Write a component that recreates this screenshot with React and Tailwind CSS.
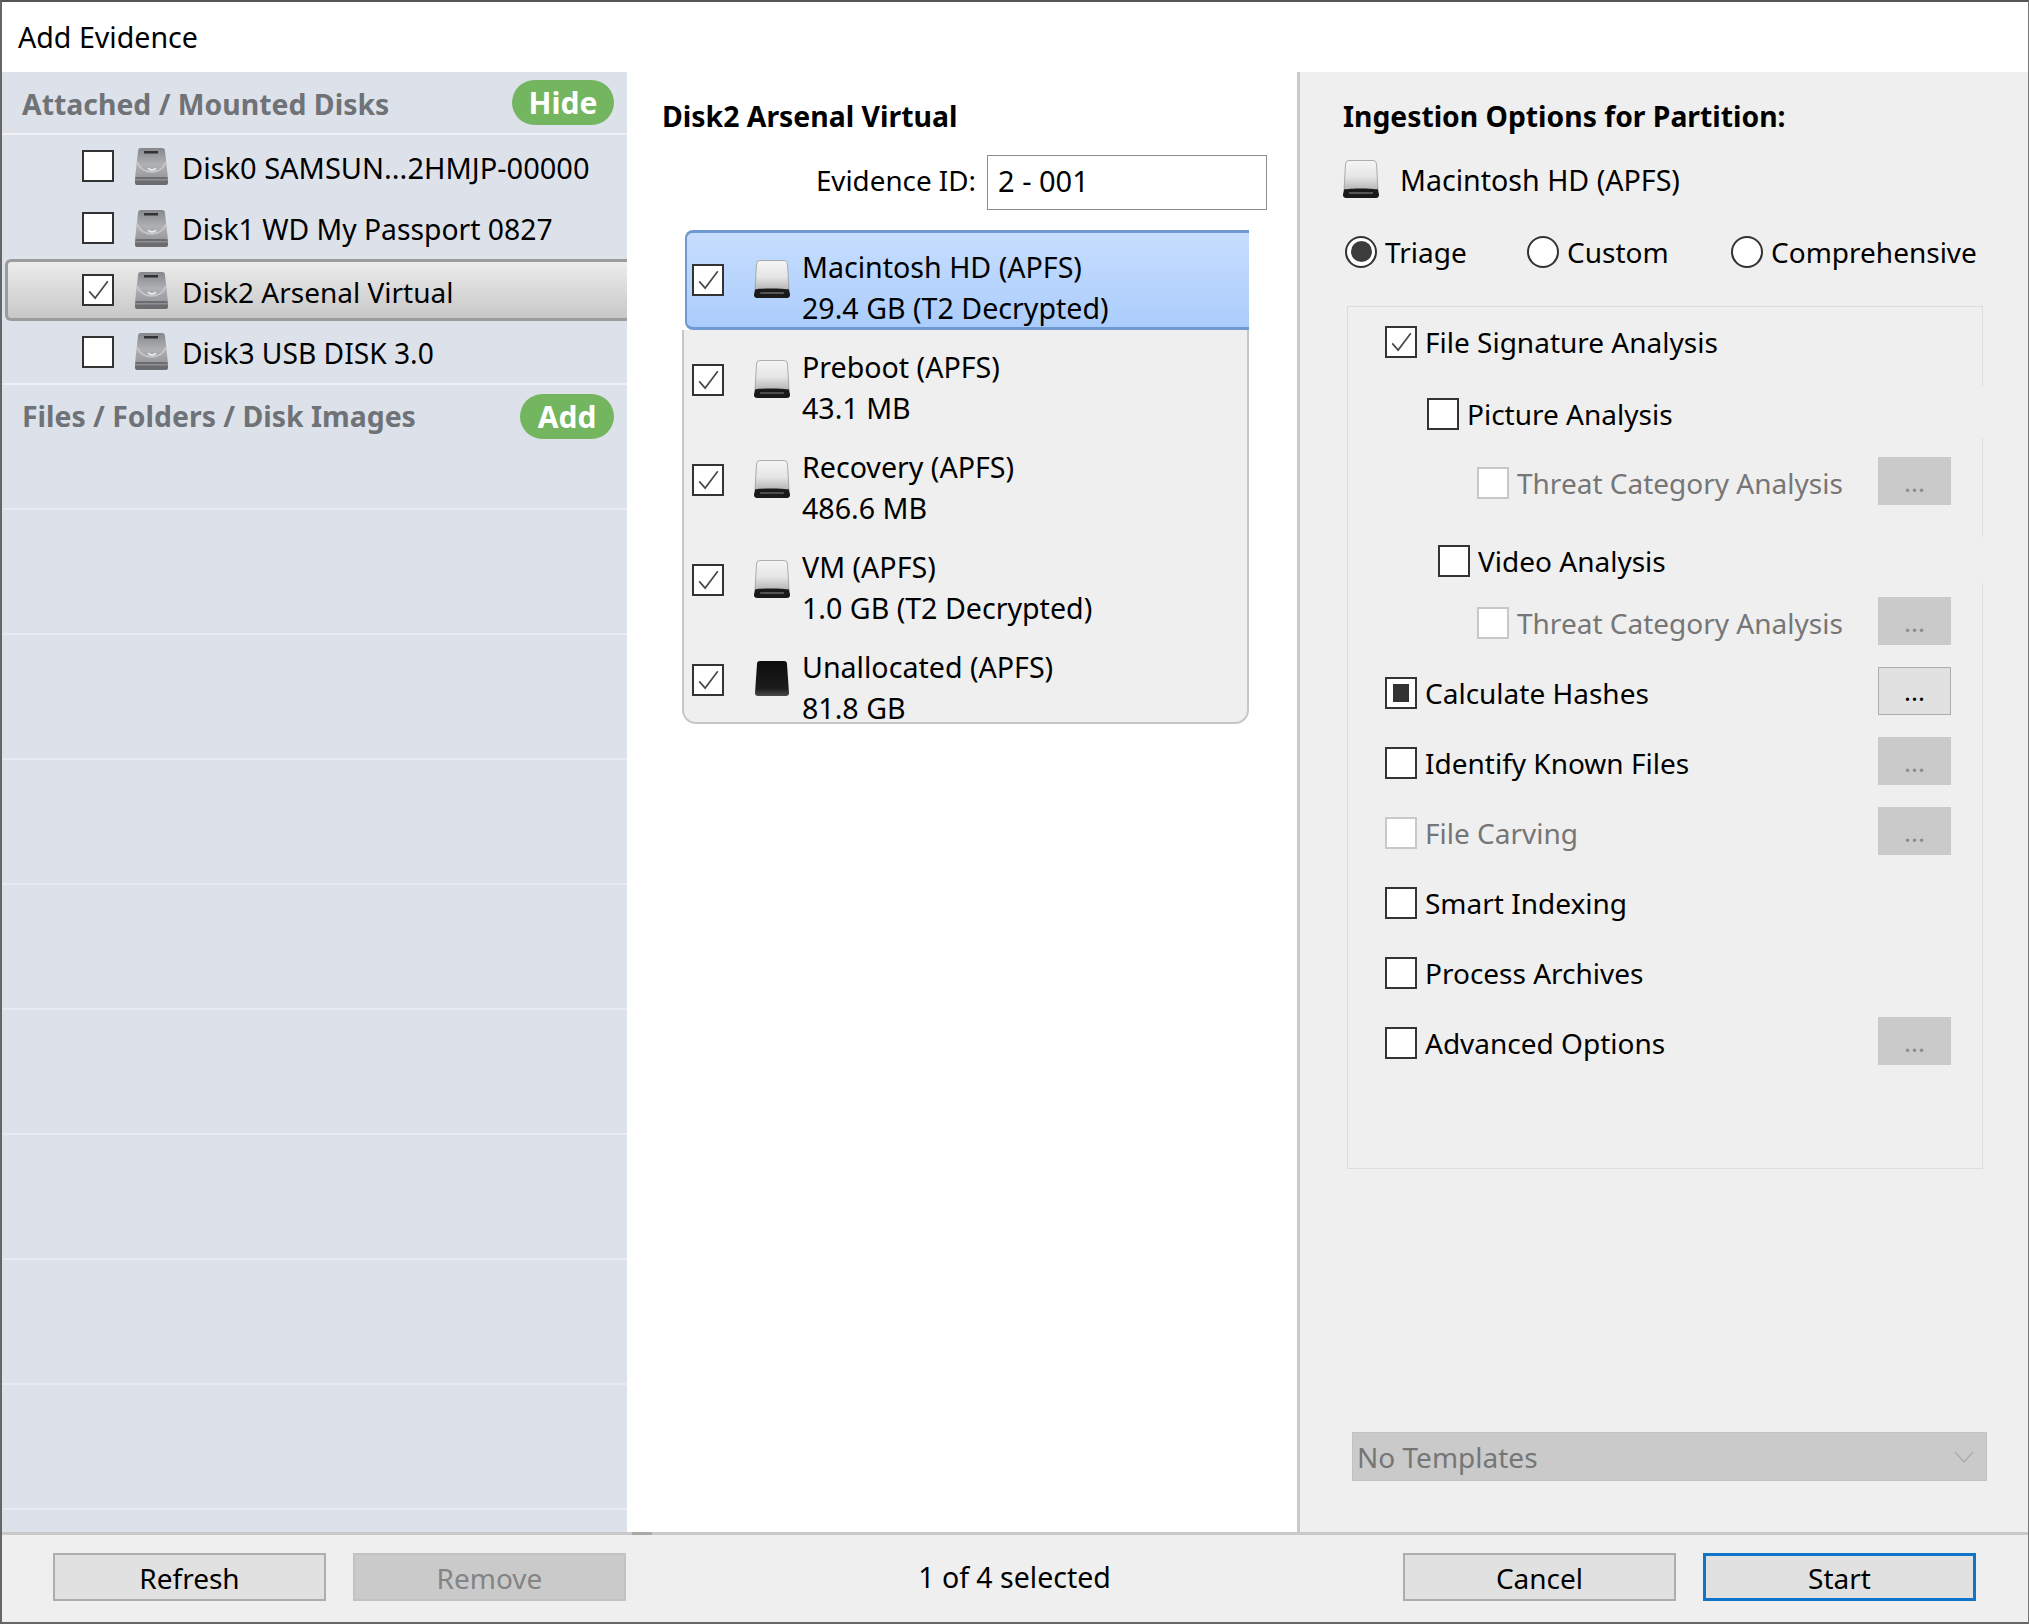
const Check = ({ checked, mixed, disabled }) => (
  <span className={`shrink-0 flex items-center justify-center w-[32px] h-[32px] border-[2.5px] bg-white ${disabled ? 'border-[#c8c8c8]' : 'border-[#333333]'}`}>
    {checked && (
      <svg viewBox="0 0 32 32" className="w-[27px] h-[27px]" fill="none" stroke="#4a4a4a" strokeWidth="2">
        <path d="M5 17l7 8L27 5" />
      </svg>
    )}
    {mixed && <span className="w-[16px] h-[18px] bg-[#333333]" />}
  </span>
);

const Radio = ({ label, on, className }) => (
  <div className={`flex items-center gap-[8px] ${className}`}>
    <span className="flex items-center justify-center w-[32px] h-[32px] rounded-full border-[2.5px] border-[#333333] bg-white">
      {on && <span className="w-[21px] h-[21px] rounded-full bg-[#3c3c3c]" />}
    </span>
    <span>{label}</span>
  </div>
);

const GrayDisk = () => (
  <svg viewBox="0 0 35 37" className="shrink-0 w-[35px] h-[37px]">
    <defs>
      <linearGradient id="grayBody" x1="0" y1="0" x2="0" y2="1">
        <stop offset="0" stopColor="#85878b" />
        <stop offset="0.55" stopColor="#aeb0b3" />
        <stop offset="1" stopColor="#97999c" />
      </linearGradient>
    </defs>
    <path d="M7 0h21a3 3 0 013 3l3 27H1L4 3a3 3 0 013-3z" fill="url(#grayBody)" />
    <rect x="1" y="29" width="33" height="8" rx="2" fill="#6a6c70" />
    <rect x="1" y="31" width="33" height="1.500" fill="#8d8f92" />
    <rect x="10" y="3" width="14" height="2.500" fill="#303236" />
    <path d="M3 14c5 13 24 13 29 0" fill="none" stroke="#c4c6c8" strokeWidth="2" />
    <path d="M14 20c2 2.500 6 2.500 8 0" fill="none" stroke="#eceded" strokeWidth="1.600" />
  </svg>
);

const PartitionDisk = ({ dark }) => (
  <svg viewBox="0 0 36 38" className="shrink-0 w-[36px] h-[38px] mb-[2px]">
    <defs>
      <linearGradient id="lightBody" x1="0" y1="0" x2="0" y2="1">
        <stop offset="0" stopColor="#f5f5f5" />
        <stop offset="0.55" stopColor="#e6e6e6" />
        <stop offset="1" stopColor="#b4b4b4" />
      </linearGradient>
      <linearGradient id="darkBody" x1="0" y1="0" x2="0" y2="1">
        <stop offset="0" stopColor="#0c0c0c" />
        <stop offset="0.78" stopColor="#1c1c1c" />
        <stop offset="1" stopColor="#4a4a4a" />
      </linearGradient>
    </defs>
    {dark ? (
      <path d="M6 1h24a3 3 0 013 3l2 29a3 3 0 01-3 3H4a3 3 0 01-3-3L3 4a3 3 0 013-3z" fill="url(#darkBody)" />
    ) : (
      <>
        <path d="M6 0.500h24a3.500 3.500 0 013.500 3.500L35 30H1L2.500 4A3.500 3.500 0 016 0.500z" fill="url(#lightBody)" stroke="#8f8f8f" strokeWidth="0.700" />
        <path d="M1 29.500c6-1.500 28-1.500 34 0l1 5a3 3 0 01-3 3.500H3a3 3 0 01-3-3.500z" fill="#1a1a1a" />
        <path d="M6 33h24" stroke="#808080" strokeWidth="1.200" />
      </>
    )}
  </svg>
);

const Pill = ({ label, className }) => (
  <span className={`flex items-center justify-center h-[45px] rounded-full bg-[#74b560] text-white text-[30px] font-bold ${className}`}>
    {label}
  </span>
);

const disks = [
  { label: 'Disk0 SAMSUN...2HMJP-00000', size: 'text-[29px]' },
  { label: 'Disk1 WD My Passport 0827', size: 'text-[28.3px]' },
  { label: 'Disk2 Arsenal Virtual', size: 'text-[28px]', selected: true },
  { label: 'Disk3 USB DISK 3.0', size: 'text-[28.2px]' },
];

const partitions = [
  { name: 'Preboot (APFS)', size: '43.1 MB' },
  { name: 'Recovery (APFS)', size: '486.6 MB' },
  { name: 'VM (APFS)', size: '1.0 GB (T2 Decrypted)' },
  { name: 'Unallocated (APFS)', size: '81.8 GB', dark: true },
];

const PartitionText = ({ name, size }) => (
  <div className="ml-[12px] mt-[14px] leading-[41px] text-[28.6px]">
    <div>{name}</div>
    <div>{size}</div>
  </div>
);

const PartitionRow = ({ name, size, dark }) => (
  <div className="flex items-center h-[100px] shrink-0 pl-[8px]">
    <Check checked />
    <span className="ml-[30px]"><PartitionDisk dark={dark} /></span>
    <PartitionText name={name} size={size} />
  </div>
);

const options = [
  { label: 'File Signature Analysis', checked: true, box: 'mt-[9px]' },
  { label: 'Picture Analysis', box: 'mt-[24px] pl-[42px]' },
  { label: 'Threat Category Analysis', disabled: true, dots: 'off', box: 'mt-[21px] pl-[92px]' },
  { label: 'Video Analysis', box: 'mt-[30px] pl-[53px]' },
  { label: 'Threat Category Analysis', disabled: true, dots: 'off', box: 'mt-[14px] pl-[92px]' },
  { label: 'Calculate Hashes', mixed: true, dots: 'on', box: 'mt-[22px]' },
  { label: 'Identify Known Files', dots: 'off', box: 'mt-[22px]' },
  { label: 'File Carving', disabled: true, dots: 'off', box: 'mt-[22px]' },
  { label: 'Smart Indexing', box: 'mt-[22px]' },
  { label: 'Process Archives', box: 'mt-[22px]' },
  { label: 'Advanced Options', dots: 'off', box: 'mt-[22px]' },
];

const Option = ({ label, checked, mixed, disabled, dots, box }) => (
  <div className={`flex items-center h-[48px] ${box}`}>
    <div className={`flex items-center gap-[8px] mt-[5px] ${disabled ? 'text-[#767676]' : 'text-black'}`}>
      <Check checked={checked} mixed={mixed} disabled={disabled} />
      <span>{label}</span>
    </div>
    {dots && (
      <span className={`ml-auto flex items-end justify-center w-[73px] h-[48px] pb-[10px] leading-[26px] text-[26px] ${dots === 'on' ? 'bg-[#e1e1e1] border border-[#adadad] text-black' : 'bg-[#cacaca] text-[#8a8a8a]'}`}>
        ...
      </span>
    )}
  </div>
);

const FooterButton = ({ label, variant = 'normal' }) => {
  const styles = {
    normal: 'bg-[#e1e1e1] border-2 border-[#adadad] text-black',
    disabled: 'bg-[#cacaca] border-2 border-[#c2c2c2] text-[#848484]',
    primary: 'bg-[#e1e1e1] border-[3px] border-[#0f75c9] text-black',
  };
  return (
    <span className={`flex items-center justify-center w-[273px] h-[48px] pt-[1px] ${styles[variant]}`}>{label}</span>
  );
};

export default function App() {
  return (
    <div className="flex flex-col w-[2029px] h-[1624px] bg-white text-black text-[28px] font-['Noto_Sans',sans-serif] border-t-2 border-l-2 border-b-2 border-r border-t-[#555555] border-l-[#666666] border-b-[#666666] border-r-[#777777] overflow-hidden">
      <div className="flex items-center h-[70px] shrink-0 pl-[16px] text-[28.6px]">Add Evidence</div>

      <div className="flex flex-1 min-h-0">
        {/* Left column */}
        <div className="flex flex-col w-[625px] shrink-0 bg-[#dde2ea]">
          <div className="flex items-center justify-between h-[63px] shrink-0 pl-[20px] pr-[13px] border-b-2 border-[#eef0f4]">
            <span className="pt-[4px] font-bold text-[#6f7276] text-[28.4px]">Attached / Mounted Disks</span>
            <Pill label="Hide" className="w-[102px]" />
          </div>
          {disks.map((disk) => (
            <div key={disk.label} className={`flex items-center shrink-0 h-[62px] gap-[20px] ${disk.selected ? 'ml-[3px] pl-[74px] rounded-l-[6px] border-y-[3px] border-l-[3px] border-[#9c9c9c] bg-gradient-to-b from-[#ececec] to-[#c8c8c8]' : 'pl-[80px]'}`}>
              <Check checked={disk.selected} />
              <span className="flex items-center gap-[13px]">
                <GrayDisk />
                <span className={`pt-[3px] ${disk.size}`}>{disk.label}</span>
              </span>
            </div>
          ))}
          <div className="flex items-center justify-between h-[127px] shrink-0 pl-[20px] pr-[13px] pb-[60px] border-y-2 border-y-[#eef0f4] border-b-[#e7eaef]">
            <span className="font-bold text-[#6f7276] text-[28.4px]">Files / Folders / Disk Images</span>
            <Pill label="Add" className="w-[94px]" />
          </div>
          {[0, 1, 2, 3, 4, 5, 6, 7].map((i) => (
            <div key={i} className="h-[125px] shrink-0 border-b-2 border-[#e7eaef]" />
          ))}
        </div>

        {/* Middle column */}
        <div className="flex flex-col w-[670px] shrink-0 bg-white">
          <div className="pt-[24px] pl-[35px] font-bold leading-[40px] text-[28.4px]">Disk2 Arsenal Virtual</div>
          <div className="flex items-center justify-end mt-[19px] pr-[30px] gap-[11px]">
            <span className="pb-[3px] text-[27.8px]">Evidence ID:</span>
            <span className="flex items-center w-[280px] h-[55px] pl-[10px] pb-[3px] border border-[#8c8c8c] text-[29px]">2 - 001</span>
          </div>
          <div className="flex flex-col w-[567px] ml-[55px] mt-[20px]">
            <div className="flex items-center h-[100px] ml-[3px] pl-[5px] rounded-l-[8px] border-y-[3px] border-l-[2px] border-y-[#7099d2] border-l-[#7099d2] bg-gradient-to-b from-[#c7ddff] to-[#abcdfb] overflow-hidden">
              <Check checked />
              <span className="ml-[30px]"><PartitionDisk /></span>
              <PartitionText name="Macintosh HD (APFS)" size="29.4 GB (T2 Decrypted)" />
            </div>
            <div className="h-[394px] bg-[#efefef] border-x-2 border-b-2 border-[#c6c6c6] rounded-b-[14px] overflow-hidden">
              {partitions.map((p) => (
                <PartitionRow key={p.name} {...p} />
              ))}
            </div>
          </div>
        </div>

        {/* Right column */}
        <div className="flex flex-col flex-1 border-l-[3px] border-[#c9c9c9] bg-[#efefef]">
          <div className="pt-[24px] pl-[43px] font-bold leading-[40px] text-[28.3px]">Ingestion Options for Partition:</div>
          <div className="flex items-center mt-[23px] pl-[43px] gap-[21px] text-[28.6px]">
            <PartitionDisk />
            <span>Macintosh HD (APFS)</span>
          </div>
          <div className="flex items-center mt-[29px] pl-[45px]">
            <Radio label="Triage" on className="w-[182px]" />
            <Radio label="Custom" className="w-[204px]" />
            <Radio label="Comprehensive" />
          </div>
          <div className="relative flex flex-col h-[863px] ml-[47px] mr-[45px] mt-[33px] pl-[37px] pr-[31px] border border-[#dcdcdc]">
            <span className="absolute -right-px top-[79px] w-px h-[52px] bg-[#efefef]" />
            <span className="absolute -right-px top-[230px] w-px h-[46px] bg-[#efefef]" />
            {options.map((o, i) => (
              <Option key={i} {...o} />
            ))}
          </div>
          <div className="flex items-center justify-between h-[49px] mt-auto mb-[51px] ml-[52px] mr-[41px] pl-[4px] pr-[12px] bg-[#cacaca] border border-[#c2c2c2] text-[#767676]">
            <span>No Templates</span>
            <svg viewBox="0 0 20 12" className="w-[20px] h-[12px]" fill="none" stroke="#aaaaaa" strokeWidth="1.200">
              <path d="M1 1l9 10 9-10" />
            </svg>
          </div>
        </div>
      </div>

      <div className="relative flex items-center h-[90px] shrink-0 pl-[51px] pr-[52px] pb-[3px] bg-[#efefef] border-t-[3px] border-[#c9c9c9]">
        <span className="absolute left-[630px] -top-[3px] w-[20px] h-[3px] bg-[#a9a9a9]" />
        <div className="flex gap-[27px]">
          <FooterButton label="Refresh" />
          <FooterButton label="Remove" variant="disabled" />
        </div>
        <div className="flex-1 text-center text-[28.5px] pt-[1px]">1 of 4 selected</div>
        <div className="flex gap-[27px]">
          <FooterButton label="Cancel" />
          <FooterButton label="Start" variant="primary" />
        </div>
      </div>
    </div>
  );
}
